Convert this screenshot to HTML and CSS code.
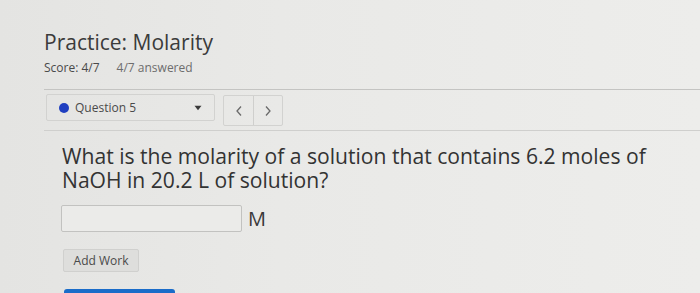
FILE: index.html
```html
<!DOCTYPE html>
<html lang="en">
<head>
<meta charset="utf-8">
<title>Practice: Molarity</title>
<link rel="stylesheet" href="styles.css">
</head>
<body>
<div class="page">
  <header class="header">
    <h1 class="title">Practice: Molarity</h1>
    <div class="meta">
      <span class="score">Score: 4/7</span>
      <span class="answered">4/7 answered</span>
    </div>
  </header>

  <div class="toolbar">
    <div class="select">
      <span class="dot"></span>
      <span class="select-label">Question 5</span>
      <svg class="caret" width="8" height="6" viewBox="0 0 8 6"><path d="M0.5 0.8 L7.5 0.8 L4 5.2 Z" fill="#3a3a3a"/></svg>
    </div>
    <div class="nav">
      <button class="nav-btn" type="button" aria-label="Previous">
        <svg width="8" height="12" viewBox="0 0 8 12"><path d="M6 1.5 L2 6 L6 10.5" fill="none" stroke="#6a6a6a" stroke-width="1.3"/></svg>
      </button>
      <button class="nav-btn" type="button" aria-label="Next">
        <svg width="8" height="12" viewBox="0 0 8 12"><path d="M2 1.5 L6 6 L2 10.5" fill="none" stroke="#6a6a6a" stroke-width="1.3"/></svg>
      </button>
    </div>
  </div>

  <main class="question">
    <p class="prompt">What is the molarity of a solution that contains 6.2 moles of NaOH in 20.2 L of solution?</p>
    <div class="answer-row">
      <input class="answer" type="text" aria-label="Answer">
      <span class="unit">M</span>
    </div>
    <button class="add-work" type="button">Add Work</button>
    <div class="submit-bar"></div>
  </main>
</div>
</body>
</html>
```

FILE: styles.css
```css
html, body {
  margin: 0;
  padding: 0;
  height: 100%;
  overflow: hidden;
}

body {
  background: linear-gradient(90deg, #e4e4e2 0%, #e9e9e7 40%, #ededeb 100%);
  font-family: "Open Sans", "Noto Sans", "Liberation Sans", sans-serif;
  color: #3a3a3a;
}

.page {
  padding: 28px 0 0 44px;
}

.title {
  margin: 0;
  font-size: 21px;
  line-height: 28px;
  font-weight: 400;
  color: #3b3b3b;
}

.meta {
  margin-top: 4px;
  display: flex;
  gap: 17px;
  font-size: 12px;
  line-height: 16px;
}

.score {
  color: #4a4a4a;
}

.answered {
  color: #6d6d6d;
}

.toolbar {
  margin-top: 13px;
  height: 36px;
  border-top: 1px solid #c4c4c2;
  border-bottom: 1px solid #cfcfcd;
  display: flex;
  align-items: flex-start;
  gap: 8px;
  padding: 4px 0 0 2px;
  box-sizing: content-box;
}

.select {
  width: 169px;
  height: 27px;
  box-sizing: border-box;
  border: 1px solid #d2d2d0;
  border-radius: 2px;
  display: flex;
  align-items: center;
  padding: 0 8px 0 12px;
  font-size: 12px;
  color: #4a4a4a;
}

.dot {
  width: 10px;
  height: 10px;
  border-radius: 50%;
  background: #1f3fc0;
  margin-right: 6px;
  flex: none;
}

.select-label {
  flex: 1;
}

.caret {
  display: block;
  margin-right: 4px;
}

.nav {
  margin-top: 1px;
  display: flex;
  height: 31px;
  border: 1px solid #d2d2d0;
  border-radius: 2px;
  box-sizing: border-box;
}

.nav-btn {
  width: 29px;
  height: 100%;
  border: 0;
  padding: 0;
  background: transparent;
  display: flex;
  align-items: center;
  justify-content: center;
}

.nav-btn + .nav-btn {
  border-left: 1px solid #cfcfcd;
}

.question {
  padding: 13px 0 0 18px;
}

.prompt {
  margin: 0;
  width: 600px;
  font-size: 21.1px;
  line-height: 24px;
  color: #333333;
}

.answer-row {
  margin-top: 13px;
  display: flex;
  align-items: center;
  gap: 6px;
}

.answer {
  margin: 0 0 0 -1px;
  width: 181px;
  height: 27px;
  box-sizing: border-box;
  border: 1px solid #c2c2c0;
  border-radius: 2px;
  background: #ebebe9;
  padding: 0 6px;
}

.unit {
  font-size: 20px;
  line-height: 24px;
  color: #3a3a3a;
}

.add-work {
  display: block;
  margin: 17px 0 0 1px;
  width: 76px;
  height: 23px;
  border: 1px solid #d0d0ce;
  border-radius: 2px;
  background: #dededc;
  font-family: inherit;
  font-size: 12px;
  color: #4a4a4a;
  padding: 0;
}

.submit-bar {
  margin: 17px 0 0 2px;
  width: 111px;
  height: 8px;
  background: #1a6cc9;
  border-radius: 3px 3px 0 0;
}
```
